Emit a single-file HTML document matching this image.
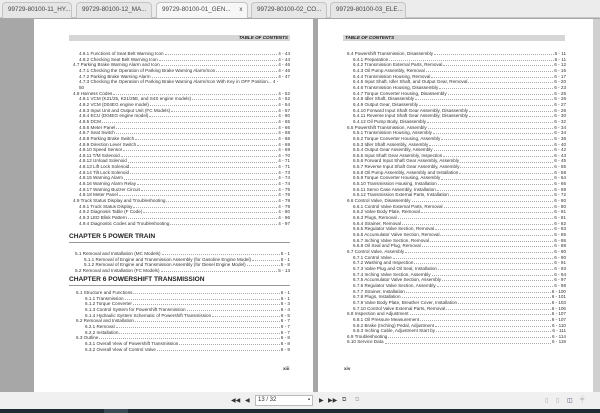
<!DOCTYPE html>
<html><head><meta charset="utf-8"><style>
*{margin:0;padding:0;box-sizing:border-box}
body{width:600px;height:413px;overflow:hidden;background:#a7a7a7;font-family:"Liberation Sans",sans-serif;position:relative}
.tabs{position:absolute;left:0;top:0;width:600px;height:18px;background:#ececec;border-bottom:1px solid #c8c8c8}
.tab{position:absolute;top:2px;height:16px;font-size:6.3px;color:#444;line-height:14px;padding-left:5px;border:1px solid #c4c4c4;border-bottom:none;border-radius:4px 4px 0 0;background:#e6e6e6}
.tab.act{background:#f7f7f7}
.page{position:absolute;top:19px;height:373px;background:#fff}
.bar{position:absolute;top:35px;height:6px;background:#d6d6d6;font-size:4.6px;font-weight:bold;font-style:italic;line-height:6px;color:#222}
.list{position:absolute;font-size:4.6px;line-height:5.67px;color:#333}
.r{display:flex;height:5.67px;white-space:nowrap}
.r .d{flex:1;border-bottom:0.5px dotted #aaa;margin:0 1px 1.6px}
.s{padding-left:6px}
h2{position:absolute;left:69px;font-size:6.6px;font-weight:bold;color:#222;width:221px;border-bottom:0.8px solid #999;line-height:8px;padding-bottom:1px}
.pn{position:absolute;font-size:4.6px;font-weight:bold;color:#333}
.tool{position:absolute;left:0;top:392px;width:600px;height:17px;background:#f0f0f0}
.task{position:absolute;left:0;top:409px;width:600px;height:4px;background:#1e2b33}
.ic{position:absolute;top:5px;font-size:6px;color:#333}
</style></head><body>
<div class="tabs">
<div class="tab" style="left:2px;width:70px">99729-80100-11_HY...</div>
<div class="tab" style="left:76px;width:76px">99729-80100-12_MA...</div>
<div class="tab act" style="left:156px;width:92px">99729-80100-01_GEN... <span style="margin-left:7px">x</span></div>
<div class="tab" style="left:251px;width:76px">99729-80100-02_CO...</div>
<div class="tab" style="left:330px;width:76px">99729-80100-03_ELE...</div>
</div>

<div class="page" style="left:34px;width:279px"></div>
<div class="page" style="left:318px;width:275px"></div>
<div style="position:absolute;left:593px;top:19px;width:7px;height:373px;background:#d0d0d0"></div>

<div class="bar" style="left:69px;width:221px;text-align:right;padding-right:2px">TABLE OF CONTENTS</div>
<div class="bar" style="left:343px;width:222px;padding-left:2px">TABLE OF CONTENTS</div>

<div class="list" style="left:73px;top:51px;width:217px">
<div class="r s"><span>4.8.1 Functions of Seat Belt Warning Icon</span><span class="d"></span><span>4 - 44</span></div>
<div class="r s"><span>4.8.2 Checking Seat Belt Warning Icon</span><span class="d"></span><span>4 - 44</span></div>
<div class="r"><span>4.7 Parking Brake Warning Alarm and Icon</span><span class="d"></span><span>4 - 46</span></div>
<div class="r s"><span>4.7.1 Checking the Operation of Parking Brake Warning Alarm/Icon</span><span class="d"></span><span>4 - 46</span></div>
<div class="r s"><span>4.7.2 Parking Brake Warning Alarm</span><span class="d"></span><span>4 - 47</span></div>
<div class="r s"><span>4.7.3 Checking the Operation of Parking Brake Warning Alarm/Icon With Key in OFF Position... 4 -</span></div>
<div class="r s"><span>50</span></div>
<div class="r"><span>4.8 Harness Codes</span><span class="d"></span><span>4 - 52</span></div>
<div class="r s"><span>4.8.1 VCM (K21/25, K21/25E, and S4S engine models)</span><span class="d"></span><span>4 - 52</span></div>
<div class="r s"><span>4.8.2 VCM (D04EG engine model)</span><span class="d"></span><span>4 - 54</span></div>
<div class="r s"><span>4.8.3 Input Unit and Output Unit (FC Models)</span><span class="d"></span><span>4 - 57</span></div>
<div class="r s"><span>4.8.4 ECU (D04EG engine model)</span><span class="d"></span><span>4 - 60</span></div>
<div class="r s"><span>4.8.5 DCM</span><span class="d"></span><span>4 - 65</span></div>
<div class="r s"><span>4.8.6 Meter Panel</span><span class="d"></span><span>4 - 66</span></div>
<div class="r s"><span>4.8.7 Seat Switch</span><span class="d"></span><span>4 - 68</span></div>
<div class="r s"><span>4.8.8 Parking Brake Switch</span><span class="d"></span><span>4 - 68</span></div>
<div class="r s"><span>4.8.9 Direction Lever Switch</span><span class="d"></span><span>4 - 69</span></div>
<div class="r s"><span>4.8.10 Speed Sensor</span><span class="d"></span><span>4 - 69</span></div>
<div class="r s"><span>4.8.11 T/M Solenoid</span><span class="d"></span><span>4 - 70</span></div>
<div class="r s"><span>4.8.12 Unload Solenoid</span><span class="d"></span><span>4 - 71</span></div>
<div class="r s"><span>4.8.13 Lift Lock Solenoid</span><span class="d"></span><span>4 - 71</span></div>
<div class="r s"><span>4.8.14 Tilt Lock Solenoid</span><span class="d"></span><span>4 - 73</span></div>
<div class="r s"><span>4.8.15 Warning Alarm</span><span class="d"></span><span>4 - 74</span></div>
<div class="r s"><span>4.8.16 Warning Alarm Relay</span><span class="d"></span><span>4 - 74</span></div>
<div class="r s"><span>4.8.17 Warning Buzzer Circuit</span><span class="d"></span><span>4 - 75</span></div>
<div class="r s"><span>4.8.18 Meter Panel</span><span class="d"></span><span>4 - 76</span></div>
<div class="r"><span>4.9 Truck Status Display and Troubleshooting</span><span class="d"></span><span>4 - 79</span></div>
<div class="r s"><span>4.9.1 Truck Status Display</span><span class="d"></span><span>4 - 79</span></div>
<div class="r s"><span>4.9.2 Diagnosis Table (F Code)</span><span class="d"></span><span>4 - 80</span></div>
<div class="r s"><span>4.9.3 LED Blink Pattern</span><span class="d"></span><span>4 - 96</span></div>
<div class="r s"><span>4.9.4 Diagnostic Codes and Troubleshooting</span><span class="d"></span><span>4 - 97</span></div>
</div>

<h2 style="top:233px">CHAPTER 5 POWER TRAIN</h2>
<div class="list" style="left:75px;top:251px;width:215px">
<div class="r"><span>5.1 Removal and Installation (MC Models)</span><span class="d"></span><span>5 - 1</span></div>
<div class="r s" style="padding-left:9px"><span>5.1.1 Removal of Engine and Transmission Assembly (for Gasoline Engine Model)</span><span class="d"></span><span>5 - 1</span></div>
<div class="r s" style="padding-left:9px"><span>5.1.2 Removal of Engine and Transmission Assembly (for Diesel Engine Model)</span><span class="d"></span><span>5 - 8</span></div>
<div class="r"><span>5.2 Removal and Installation (FC Models)</span><span class="d"></span><span>5 - 13</span></div>
</div>

<h2 style="top:276px">CHAPTER 6 POWERSHIFT TRANSMISSION</h2>
<div class="list" style="left:76px;top:290px;width:214px">
<div class="r"><span>6.1 Structure and Functions</span><span class="d"></span><span>6 - 1</span></div>
<div class="r s" style="padding-left:9px"><span>6.1.1 Transmission</span><span class="d"></span><span>6 - 1</span></div>
<div class="r s" style="padding-left:9px"><span>6.1.2 Torque Converter</span><span class="d"></span><span>6 - 3</span></div>
<div class="r s" style="padding-left:9px"><span>6.1.3 Control System for Powershift Transmission</span><span class="d"></span><span>6 - 4</span></div>
<div class="r s" style="padding-left:9px"><span>6.1.4 Hydraulic System Schematic of Powershift Transmission</span><span class="d"></span><span>6 - 5</span></div>
<div class="r"><span>6.2 Removal and Installation</span><span class="d"></span><span>6 - 7</span></div>
<div class="r s" style="padding-left:9px"><span>6.2.1 Removal</span><span class="d"></span><span>6 - 7</span></div>
<div class="r s" style="padding-left:9px"><span>6.2.2 Installation</span><span class="d"></span><span>6 - 7</span></div>
<div class="r"><span>6.3 Outline</span><span class="d"></span><span>6 - 8</span></div>
<div class="r s" style="padding-left:9px"><span>6.3.1 Overall View of Powershift Transmission</span><span class="d"></span><span>6 - 8</span></div>
<div class="r s" style="padding-left:9px"><span>6.3.2 Overall View of Control Valve</span><span class="d"></span><span>6 - 9</span></div>
</div>
<div class="pn" style="left:283px;top:366px">xiii</div>

<div class="list" style="left:347px;top:51px;width:219px">
<div class="r"><span>6.4 Powershift Transmission, Disassembly</span><span class="d"></span><span>6 - 11</span></div>
<div class="r s"><span>6.4.1 Preparation</span><span class="d"></span><span>6 - 11</span></div>
<div class="r s"><span>6.4.2 Transmission External Parts, Removal</span><span class="d"></span><span>6 - 12</span></div>
<div class="r s"><span>6.4.3 Oil Pump Assembly, Removal</span><span class="d"></span><span>6 - 16</span></div>
<div class="r s"><span>6.4.4 Transmission Housing, Removal</span><span class="d"></span><span>6 - 17</span></div>
<div class="r s"><span>6.4.5 Input Shaft, Idler Shaft, and Output Gear, Removal</span><span class="d"></span><span>6 - 20</span></div>
<div class="r s"><span>6.4.6 Transmission Housing, Disassembly</span><span class="d"></span><span>6 - 23</span></div>
<div class="r s"><span>6.4.7 Torque Converter Housing, Disassembly</span><span class="d"></span><span>6 - 25</span></div>
<div class="r s"><span>6.4.8 Idler Shaft, Disassembly</span><span class="d"></span><span>6 - 26</span></div>
<div class="r s"><span>6.4.9 Output Gear, Disassembly</span><span class="d"></span><span>6 - 27</span></div>
<div class="r s"><span>6.4.10 Forward Input Shaft Gear Assembly, Disassembly</span><span class="d"></span><span>6 - 28</span></div>
<div class="r s"><span>6.4.11 Reverse Input Shaft Gear Assembly, Disassembly</span><span class="d"></span><span>6 - 30</span></div>
<div class="r s"><span>6.4.12 Oil Pump Body, Disassembly</span><span class="d"></span><span>6 - 32</span></div>
<div class="r"><span>6.5 Powershift Transmission, Assembly</span><span class="d"></span><span>6 - 34</span></div>
<div class="r s"><span>6.5.1 Transmission Housing, Assembly</span><span class="d"></span><span>6 - 34</span></div>
<div class="r s"><span>6.5.2 Torque Converter Housing, Assembly</span><span class="d"></span><span>6 - 36</span></div>
<div class="r s"><span>6.5.3 Idler Shaft Assembly, Assembly</span><span class="d"></span><span>6 - 40</span></div>
<div class="r s"><span>6.5.4 Output Gear Assembly, Assembly</span><span class="d"></span><span>6 - 42</span></div>
<div class="r s"><span>6.5.5 Input Shaft Gear Assembly, Inspection</span><span class="d"></span><span>6 - 43</span></div>
<div class="r s"><span>6.5.6 Forward Input Shaft Gear Assembly, Assembly</span><span class="d"></span><span>6 - 45</span></div>
<div class="r s"><span>6.5.7 Reverse Input Shaft Gear Assembly, Assembly</span><span class="d"></span><span>6 - 55</span></div>
<div class="r s"><span>6.5.8 Oil Pump Assembly, Assembly and Installation</span><span class="d"></span><span>6 - 58</span></div>
<div class="r s"><span>6.5.9 Torque Converter Housing, Assembly</span><span class="d"></span><span>6 - 64</span></div>
<div class="r s"><span>6.5.10 Transmission Housing, Installation</span><span class="d"></span><span>6 - 66</span></div>
<div class="r s"><span>6.5.11 Servo Case Assembly, Installation</span><span class="d"></span><span>6 - 69</span></div>
<div class="r s"><span>6.5.12 Transmission External Parts, Installation</span><span class="d"></span><span>6 - 72</span></div>
<div class="r"><span>6.6 Control Valve, Disassembly</span><span class="d"></span><span>6 - 80</span></div>
<div class="r s"><span>6.6.1 Control Valve External Parts, Removal</span><span class="d"></span><span>6 - 80</span></div>
<div class="r s"><span>6.6.2 Valve Body Plate, Removal</span><span class="d"></span><span>6 - 81</span></div>
<div class="r s"><span>6.6.3 Plugs, Removal</span><span class="d"></span><span>6 - 81</span></div>
<div class="r s"><span>6.6.4 Strainer, Removal</span><span class="d"></span><span>6 - 82</span></div>
<div class="r s"><span>6.6.5 Regulator Valve Section, Removal</span><span class="d"></span><span>6 - 83</span></div>
<div class="r s"><span>6.6.6 Accumulator Valve Section, Removal</span><span class="d"></span><span>6 - 85</span></div>
<div class="r s"><span>6.6.7 Inching Valve Section, Removal</span><span class="d"></span><span>6 - 86</span></div>
<div class="r s"><span>6.6.8 Oil Seal and Plug, Removal</span><span class="d"></span><span>6 - 88</span></div>
<div class="r"><span>6.7 Control Valve, Assembly</span><span class="d"></span><span>6 - 90</span></div>
<div class="r s"><span>6.7.1 Control Valve</span><span class="d"></span><span>6 - 90</span></div>
<div class="r s"><span>6.7.2 Washing and Inspection</span><span class="d"></span><span>6 - 91</span></div>
<div class="r s"><span>6.7.3 Valve Plug and Oil Seal, Installation</span><span class="d"></span><span>6 - 93</span></div>
<div class="r s"><span>6.7.4 Inching Valve Section, Assembly</span><span class="d"></span><span>6 - 94</span></div>
<div class="r s"><span>6.7.5 Accumulator Valve Section, Assembly</span><span class="d"></span><span>6 - 97</span></div>
<div class="r s"><span>6.7.6 Regulator Valve Section, Assembly</span><span class="d"></span><span>6 - 98</span></div>
<div class="r s"><span>6.7.7 Strainer, Installation</span><span class="d"></span><span>6 - 100</span></div>
<div class="r s"><span>6.7.8 Plugs, Installation</span><span class="d"></span><span>6 - 101</span></div>
<div class="r s"><span>6.7.9 Valve Body Plate, Breather Cover, Installation</span><span class="d"></span><span>6 - 103</span></div>
<div class="r s"><span>6.7.10 Control Valve External Parts, Removal</span><span class="d"></span><span>6 - 106</span></div>
<div class="r"><span>6.8 Inspection and Adjustment</span><span class="d"></span><span>6 - 107</span></div>
<div class="r s"><span>6.8.1 Oil Pressure Measurement</span><span class="d"></span><span>6 - 107</span></div>
<div class="r s"><span>6.8.2 Brake (Inching) Pedal, Adjustment</span><span class="d"></span><span>6 - 110</span></div>
<div class="r s"><span>6.8.3 Inching Cable, Adjustment Start by</span><span class="d"></span><span>6 - 111</span></div>
<div class="r"><span>6.9 Troubleshooting</span><span class="d"></span><span>6 - 114</span></div>
<div class="r"><span>6.10 Service Data</span><span class="d"></span><span>6 - 119</span></div>
</div>
<div class="pn" style="left:344px;top:366px">xiv</div>

<div class="tool">
<span class="ic" style="left:231px">◀◀</span>
<span class="ic" style="left:245px">◀</span>
<div style="position:absolute;left:255px;top:3px;width:58px;height:11px;background:#fff;border:1px solid #bbb;font-size:6px;line-height:9px;padding-left:2px;color:#333">13 / 32<span style="position:absolute;right:2px">▪</span></div>
<span class="ic" style="left:319px">▶</span>
<span class="ic" style="left:328px">▶▶</span>
<span class="ic" style="left:342px;color:#666">⧉</span>
<span class="ic" style="left:355px;color:#bbb">⧉</span>
<span class="ic" style="left:545px;color:#aaa">▯</span>
<span class="ic" style="left:556px;color:#aaa">▯</span>
<span class="ic" style="left:567px;color:#557;">◫</span>
<span class="ic" style="left:580px;color:#aaa">╪</span>
</div>
<div class="task"><div style="position:absolute;left:104px;top:0;width:24px;height:4px;background:#3a4a55"></div></div>
</body></html>
